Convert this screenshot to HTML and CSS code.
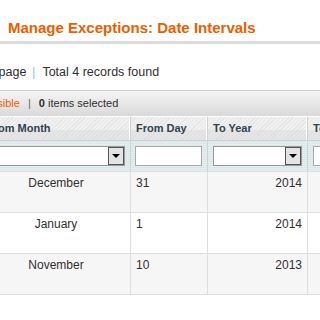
FILE: index.html
```html
<!DOCTYPE html>
<html lang="en">

<head>
    <meta charset="UTF-8">
    <meta name="viewport" content="width=device-width, initial-scale=1.0">
    <title>Manage Exceptions: Date Intervals</title>
    <link rel="stylesheet" href="styles.css">
</head>

<body>
    <div class="content-header">
        <h3>Manage Exceptions: Date Intervals</h3>
    </div>
    <div class="pager">
        <span>Items per page</span>
        <span class="sep">|</span>
        <span>Total 4 records found</span>
    </div>
    <div class="massaction">
        <a class="link">Select Visible</a>
        <span class="sep">|</span>
        <span><strong>0</strong> items selected</span>
    </div>
    <div class="grid">
        <div class="row headings">
            <div class="cell">From Month</div>
            <div class="cell">From Day</div>
            <div class="cell">To Year</div>
            <div class="cell">To Month</div>
        </div>
        <div class="row filter">
            <div class="cell"><div class="select"><span class="btn"></span></div></div>
            <div class="cell"><div class="input"></div></div>
            <div class="cell"><div class="select"><span class="btn"></span></div></div>
            <div class="cell"><div class="input"></div></div>
        </div>
        <div class="row data odd">
            <div class="cell center">December</div>
            <div class="cell">31</div>
            <div class="cell right">2014</div>
            <div class="cell center">December</div>
        </div>
        <div class="row data">
            <div class="cell center">January</div>
            <div class="cell">1</div>
            <div class="cell right">2014</div>
            <div class="cell center">March</div>
        </div>
        <div class="row data odd">
            <div class="cell center">November</div>
            <div class="cell">10</div>
            <div class="cell right">2013</div>
            <div class="cell center">November</div>
        </div>
    </div>
</body>

</html>
```

FILE: styles.css
```css
body {
    font-family: 'Liberation Sans', Arial, sans-serif;
    font-size: 12px;
    color: #2f2f2f;
    background: #fff;
    margin: 0;
    overflow: hidden;
}

.content-header {
    height: 22px;
    padding: 19px 0 0 8px;
    border-bottom: 3px solid #dcdcdc;
}

.content-header h3 {
    margin: 0;
    font-size: 15px;
    line-height: 17px;
    font-weight: bold;
    color: #eb5e00;
    white-space: nowrap;
}

.pager {
    height: 14px;
    padding: 21px 0 11px 0;
    line-height: 14px;
    font-size: 12.5px;
    margin-left: -57px;
    white-space: nowrap;
    border-bottom: 1px solid #d2d2d2;
}

.pager .sep {
    color: #8fc1e6;
    margin: 0 4px 0 2px;
}

.massaction {
    height: 13px;
    padding: 6px 0 6px 0;
    line-height: 13px;
    font-size: 11px;
    margin-left: -46px;
    white-space: nowrap;
    background: linear-gradient(#f5f5f5, #d9d9d9);
    border-bottom: 1px solid #fff;
}

.massaction .link {
    color: #eb5e00;
}

.massaction .sep {
    color: #666;
    margin: 0 5px 0 5px;
}

.grid {
    margin-left: -18px;
    width: 500px;
}

.row {
    display: grid;
    grid-template-columns: 149px 77px 100px 174px;
}

.cell {
    border-right: 1px solid #dadfe0;
    padding: 0 5px;
    white-space: nowrap;
    overflow: hidden;
}

.headings {
    background:
        linear-gradient(rgba(255, 255, 255, 0) 55%, rgba(210, 210, 210, 0.35) 55%),
        repeating-linear-gradient(-45deg, #f0f0f0 0, #f0f0f0 2px, #e6e6e6 2px, #e6e6e6 3px);
    border-bottom: 1px solid #c9d3d6;
}

.headings .cell {
    height: 18px;
    padding-top: 5px;
    padding-left: 5px;
    line-height: 13px;
    font-size: 11px;
    font-weight: bold;
    color: #2d444f;
    border-right: 1px solid #d1d1d1;
    box-shadow: inset -1px 0 #fff;
}

.filter {
    background-color: #dce7e9;
    background-image: repeating-linear-gradient(0deg, rgba(255, 255, 255, 0.25) 0, rgba(255, 255, 255, 0.25) 1px, transparent 1px, transparent 2px);
    border-bottom: 1px solid #dadfe0;
}

.filter .cell {
    height: 20px;
    padding: 5px 5px 5px 5px;
    border-right: 1px solid #c9d6d9;
}

.input,
.select {
    height: 18px;
    background: #fff;
    border: 1px solid #aaa;
    box-sizing: content-box;
}

.filter .cell:nth-child(2) .input {
    margin-left: -1px;
}

.select {
    display: flex;
    justify-content: flex-end;
    border-color: #999;
}

.select .btn {
    width: 14px;
    height: 16px;
    margin: 0;
    background: #e4e4e4;
    border: 1px solid #555;
    position: relative;
}

.select .btn::after {
    content: '';
    position: absolute;
    left: 3px;
    top: 6px;
    border-left: 4px solid transparent;
    border-right: 4px solid transparent;
    border-top: 4px solid #000;
}

.data {
    border-bottom: 1px solid #dadfe0;
}

.data.odd {
    background: #f6f6f6;
}

.data .cell {
    height: 36px;
    padding-top: 4px;
    line-height: 15px;
}

.center {
    text-align: center;
}

.right {
    text-align: right;
}
```
